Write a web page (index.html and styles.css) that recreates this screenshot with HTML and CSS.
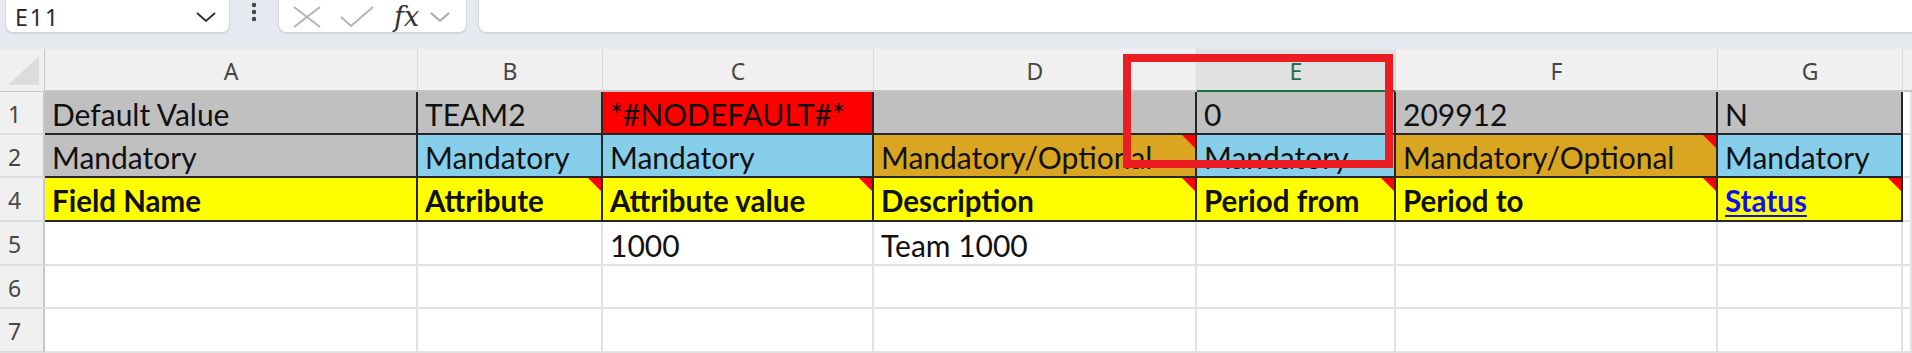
FILE: index.html
```html
<!DOCTYPE html>
<html>
<head>
<meta charset="utf-8">
<link rel="stylesheet" href="styles.css">
</head>
<body>
<div class="toolbar">
  <div class="namebox">
    <span class="ref">E11</span>
    <svg class="chev" width="22" height="14" viewBox="0 0 22 14"><path d="M2 3 L11 11 L20 3" fill="none" stroke="#333" stroke-width="2"/></svg>
  </div>
  <div class="dots">
    <svg width="6" height="22" viewBox="0 0 6 22"><circle cx="3" cy="3" r="2.2" fill="#444"/><circle cx="3" cy="10" r="2.2" fill="#444"/><circle cx="3" cy="17" r="2.2" fill="#444"/></svg>
  </div>
  <div class="fxbox">
    <svg class="ic" width="30" height="22" viewBox="0 0 30 22"><path d="M2 1 L28 21 M28 1 L2 21" stroke="#b4b4b4" stroke-width="2" fill="none"/></svg>
    <svg class="ic ic2" width="34" height="22" viewBox="0 0 34 22"><path d="M1 11 L11 20 L33 1" stroke="#b4b4b4" stroke-width="2" fill="none"/></svg>
    <span class="fx">fx</span>
    <svg class="chev2" width="22" height="14" viewBox="0 0 22 14"><path d="M2 3 L11 11 L20 3" fill="none" stroke="#aaa" stroke-width="2"/></svg>
  </div>
  <div class="formula"></div>
</div>

<div class="sheet">
  <div class="corner"><div class="tri"></div></div>
  <div class="ch">A</div>
  <div class="ch">B</div>
  <div class="ch">C</div>
  <div class="ch">D</div>
  <div class="ch sel">E</div>
  <div class="ch">F</div>
  <div class="ch">G</div>
  <div class="ch last"></div>

  <div class="rh">1</div>
  <div class="cell gray">Default Value</div>
  <div class="cell gray">TEAM2</div>
  <div class="cell red">*#NODEFAULT#*</div>
  <div class="cell gray"></div>
  <div class="cell gray">0</div>
  <div class="cell gray">209912</div>
  <div class="cell gray">N</div>
  <div class="cell blank"></div>

  <div class="rh">2</div>
  <div class="cell gray">Mandatory</div>
  <div class="cell blue">Mandatory</div>
  <div class="cell blue">Mandatory</div>
  <div class="cell orange note">Mandatory/Optional</div>
  <div class="cell blue">Mandatory</div>
  <div class="cell orange note">Mandatory/Optional</div>
  <div class="cell blue">Mandatory</div>
  <div class="cell blank"></div>

  <div class="rh">4</div>
  <div class="cell yellow b">Field Name</div>
  <div class="cell yellow b note">Attribute</div>
  <div class="cell yellow b note">Attribute value</div>
  <div class="cell yellow b note">Description</div>
  <div class="cell yellow b note">Period from</div>
  <div class="cell yellow b note">Period to</div>
  <div class="cell yellow b note"><span class="link">Status</span></div>
  <div class="cell blank"></div>

  <div class="rh">5</div>
  <div class="cell blank"></div>
  <div class="cell blank"></div>
  <div class="cell blank">1000</div>
  <div class="cell blank">Team 1000</div>
  <div class="cell blank"></div>
  <div class="cell blank"></div>
  <div class="cell blank"></div>
  <div class="cell blank"></div>

  <div class="rh">6</div>
  <div class="cell blank"></div>
  <div class="cell blank"></div>
  <div class="cell blank"></div>
  <div class="cell blank"></div>
  <div class="cell blank"></div>
  <div class="cell blank"></div>
  <div class="cell blank"></div>
  <div class="cell blank"></div>

  <div class="rh">7</div>
  <div class="cell blank"></div>
  <div class="cell blank"></div>
  <div class="cell blank"></div>
  <div class="cell blank"></div>
  <div class="cell blank"></div>
  <div class="cell blank"></div>
  <div class="cell blank"></div>
  <div class="cell blank"></div>
</div>

<div class="annot"></div>
</body>
</html>
```

FILE: styles.css
```css
html, body {
  margin: 0;
  padding: 0;
  overflow: hidden;
}
body {
  width: 1912px;
  height: 353px;
  background: #ffffff;
  position: relative;
  font-family: "Lato", "Liberation Sans", sans-serif;
}

/* toolbar */
.toolbar {
  height: 49px;
  background: #e6e9ef;
  display: flex;
  align-items: flex-start;
  overflow: hidden;
}
.namebox, .fxbox, .formula {
  margin-top: -8px;
  height: 41px;
  background: #ffffff;
  border: 1px solid #d4d6da;
  border-radius: 8px;
  box-shadow: 0 1px 1px rgba(0,0,0,0.08);
  box-sizing: border-box;
  display: flex;
  align-items: center;
  padding-top: 8px;
}
.namebox {
  margin-left: 5px;
  width: 225px;
  padding-left: 9px;
  padding-right: 12px;
  justify-content: space-between;
}
.ref {
  font-family: "Noto Sans", "Open Sans", sans-serif;
  font-size: 23px;
  letter-spacing: 2px;
  color: #2b2b2b;
}
.dots {
  width: 48px;
  display: flex;
  justify-content: center;
  padding-top: 2px;
}
.fxbox {
  width: 189px;
  padding-left: 13px;
}
.fxbox .ic { margin-right: 18px; }
.fxbox .ic2 { margin-right: 20px; }
.fx {
  font-family: "DejaVu Serif", "Liberation Serif", serif;
  font-style: italic;
  font-size: 27px;
  line-height: 30px;
  color: #333;
  letter-spacing: 0;
}
.chev2 { margin-left: 10px; }
.formula {
  margin-left: 11px;
  flex: 1;
  margin-right: -10px;
}

/* sheet */
.sheet {
  display: grid;
  grid-template-columns: 45px 373px 185px 271px 323px 199px 322px 185px 1fr;
  grid-template-rows: 43px 43px 43px 44px 44px 43px 44px;
}
.corner {
  background: #f0f0f0;
  border-right: 1px solid #c8c8c8;
  border-bottom: 1px solid #c8c8c8;
  box-sizing: border-box;
  position: relative;
}
.tri {
  position: absolute;
  left: 8px;
  top: 7px;
  width: 0;
  height: 0;
  border-left: 31px solid transparent;
  border-bottom: 29px solid #dcdcdc;
}
.ch {
  background: #f0f0f0;
  border-right: 1px solid #d9d9d9;
  border-bottom: 2px solid #c6c6c6;
  box-sizing: border-box;
  display: flex;
  align-items: center;
  justify-content: center;
  font-family: "Noto Sans", "Open Sans", sans-serif;
  font-size: 23px;
  color: #474747;
  padding-top: 2px;
}
.ch.sel {
  background: #e1e1e1;
  color: #1e7145;
  border-bottom: 2px solid #1e7145;
}
.ch.last { border-right: none; }
.rh {
  background: #f0f0f0;
  border-right: 2px solid #c8c8c8;
  border-bottom: 2px solid #dedede;
  box-sizing: border-box;
  display: flex;
  align-items: center;
  padding-left: 8px;
  padding-top: 2px;
  font-family: "Noto Sans", "Open Sans", sans-serif;
  font-size: 23px;
  color: #474747;
}
.cell {
  box-sizing: border-box;
  display: flex;
  align-items: flex-end;
  padding-left: 7px;
  padding-bottom: 2px;
  font-size: 30px;
  line-height: 34px;
  color: #111;
  white-space: nowrap;
  position: relative;
}
.gray, .red, .blue, .orange, .yellow {
  border-right: 2px solid #262626;
  border-bottom: 2px solid #262626;
}
.gray { background: #c0c0c0; }
.red { background: #ff0000; }
.blue { background: #87ceeb; }
.orange { background: #daa520; }
.yellow { background: #ffff00; }
.b {
  font-weight: 700;
  font-size: 29.5px;
}
.blank {
  background: #ffffff;
  border-right: 2px solid #e2e2e2;
  border-bottom: 2px solid #e2e2e2;
}
.link {
  color: #1010ee;
  text-decoration: underline;
  text-decoration-thickness: 2px;
  text-underline-offset: 3px;
}
.note::after {
  content: "";
  position: absolute;
  top: 0;
  right: 0;
  width: 0;
  height: 0;
  border-top: 13px solid #ff0000;
  border-left: 13px solid transparent;
}

/* annotation rectangle */
.annot {
  position: absolute;
  left: 1123px;
  top: 54px;
  width: 270px;
  height: 114px;
  border: 8px solid #ec1c24;
  box-sizing: border-box;
}
```
